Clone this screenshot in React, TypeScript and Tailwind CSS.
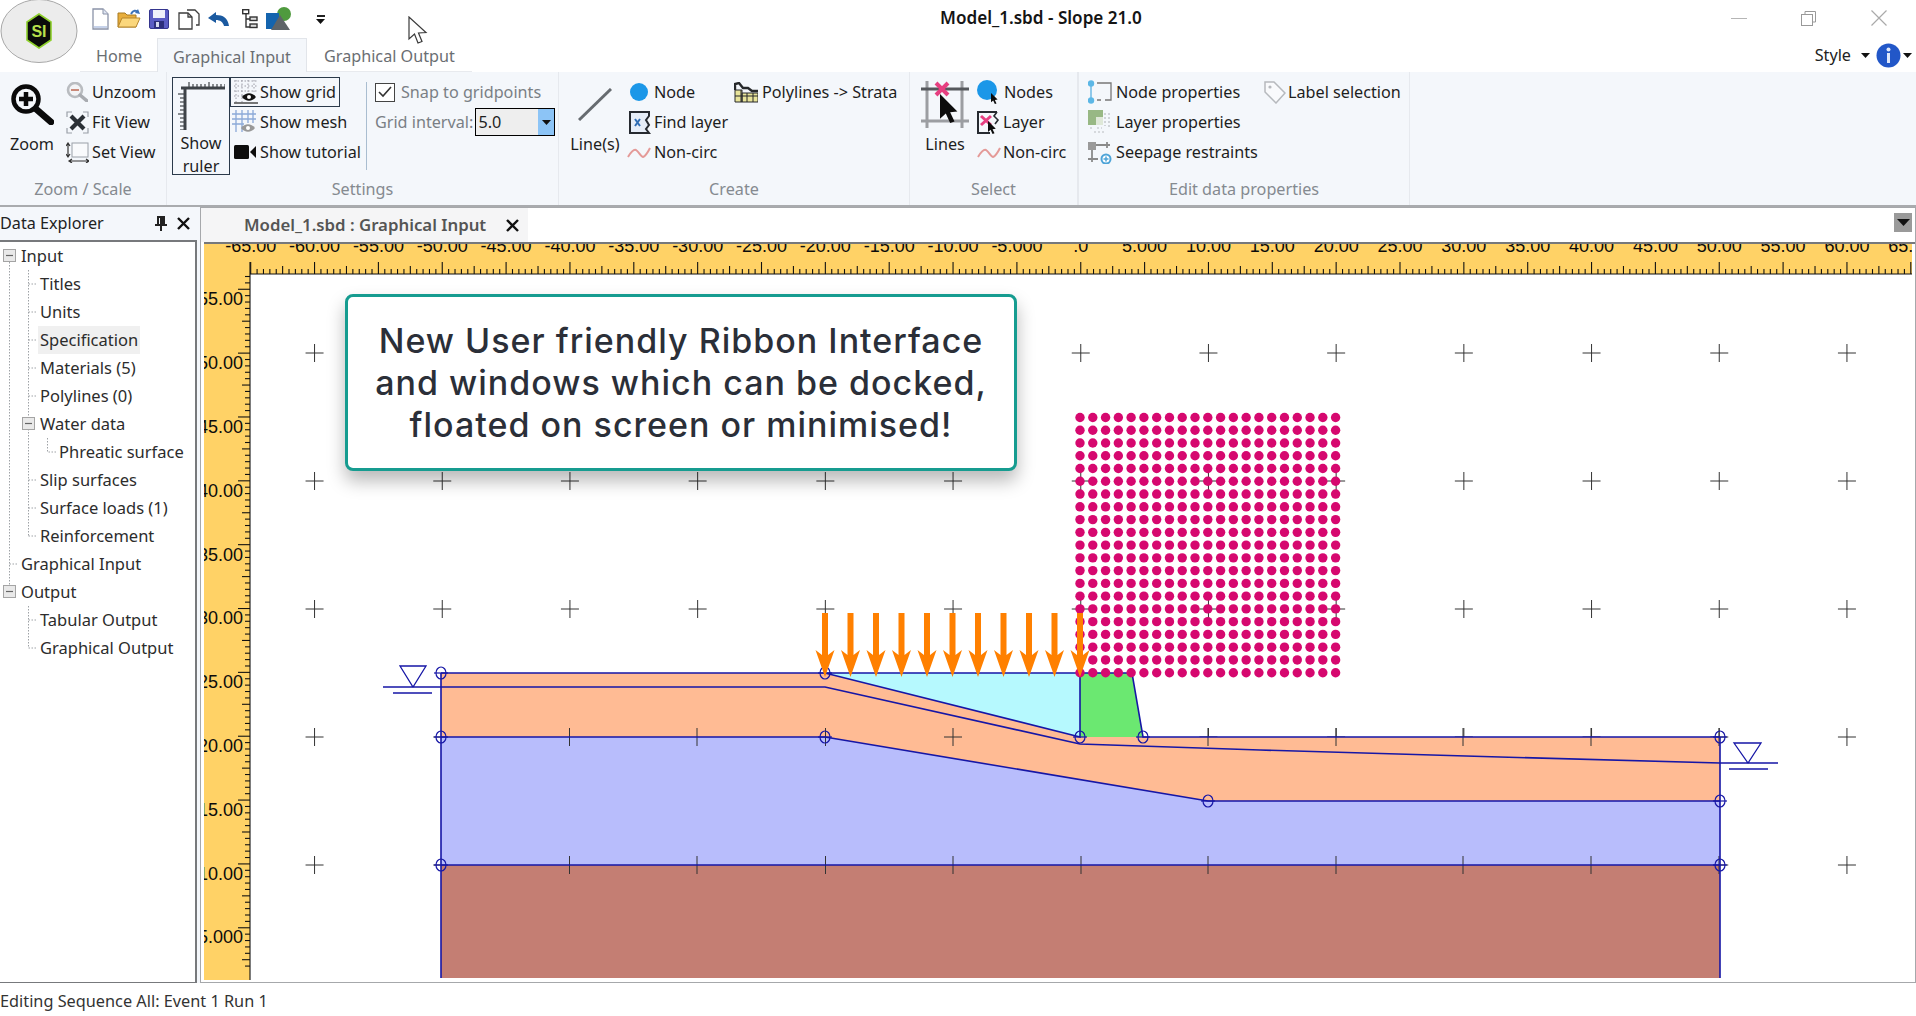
import type { ReactNode } from "react";

const LINE = "#1616a6";

const Caret = ({ w = 9, h = 5, color = "#111" }: { w?: number; h?: number; color?: string }) => (
  <svg width={w} height={h} viewBox="0 0 8 4" preserveAspectRatio="none">
    <path d="M0 0H8L4 4Z" fill={color} />
  </svg>
);

/* quick access toolbar */
const NewDoc = () => (
  <svg width="17" height="22" viewBox="0 0 17 22">
    <path d="M1 1H11L16 6V21H1Z" fill="#fff" stroke="#8a93a8" strokeWidth="1.3" />
    <path d="M11 1V6H16" fill="#dfe6f3" stroke="#8a93a8" />
    <path d="M2 18H15V20H2Z" fill="#c6d2ea" />
  </svg>
);
const OpenFolder = () => (
  <svg width="24" height="20" viewBox="0 0 24 20">
    <path d="M1 4H8L10 6H19V18H1Z" fill="#e8ae3c" stroke="#a87a22" />
    <path d="M1 18L5 9H23L19 18Z" fill="#fbd77c" stroke="#b8872c" />
    <path d="M14 5C16 1 19 1 21 3" fill="none" stroke="#3c72b8" strokeWidth="2" />
    <path d="M21 0L23 5L18 4Z" fill="#3c72b8" />
  </svg>
);
const SaveDisk = () => (
  <svg width="20" height="20" viewBox="0 0 20 20">
    <rect x="0.5" y="0.5" width="19" height="19" rx="1.5" fill="#5a5cc4" stroke="#34358e" />
    <rect x="4" y="1" width="12" height="8" fill="#eef0fa" />
    <rect x="5" y="12" width="10" height="7" fill="#2c2e7c" />
    <rect x="7" y="13" width="3" height="5" fill="#d5d8ef" />
  </svg>
);
const CopyDoc = () => (
  <svg width="22" height="21" viewBox="0 0 22 21" fill="#fff" stroke="#3d3d3d" strokeWidth="1.3">
    <path d="M9 1H17L21 5V16H18" />
    <path d="M1 4H10L14 8V20H1Z" />
    <path d="M10 4V8H14" fill="none" />
  </svg>
);
const Undo = () => (
  <svg width="22" height="14" viewBox="0 0 22 14">
    <path d="M0 6L8 0V3C15 3 20 6 21 14H16C15 10 12 8 8 8V11Z" fill="#1b5aa0" />
  </svg>
);
const TreeIcon = () => (
  <svg width="16" height="20" viewBox="0 0 16 20" fill="none" stroke="#333" strokeWidth="1.4">
    <rect x="0.7" y="0.7" width="6" height="4" />
    <path d="M4 5V18H8M4 10H8" />
    <rect x="8" y="8" width="7" height="3.5" fill="#ddd" />
    <rect x="8" y="15" width="7" height="3.5" fill="#ddd" />
  </svg>
);
const ModelIcon = () => (
  <svg width="25" height="24" viewBox="0 0 25 24">
    <circle cx="18" cy="7" r="7" fill="#4f9a3e" />
    <path d="M0 6H13V15L6 22H0Z" fill="#1464ae" />
    <path d="M14 8L24 23H5Z" fill="#5e6468" />
  </svg>
);

/* ribbon icons */
const ZoomIcon = () => (
  <svg width="43" height="41" viewBox="0 0 43 41" fill="none" stroke="#0a0a0a">
    <circle cx="15" cy="15" r="12.5" strokeWidth="4.5" />
    <path d="M15 8V22M8 15H22" strokeWidth="4.5" />
    <path d="M25 25L40 38" strokeWidth="6.5" strokeLinecap="round" />
  </svg>
);
const UnzoomIcon = () => (
  <svg width="22" height="20" viewBox="0 0 22 20" fill="none">
    <circle cx="9" cy="8" r="7" stroke="#b9bcc0" strokeWidth="2.6" fill="#f3f4f6" />
    <path d="M5 8H13" stroke="#c98a7a" strokeWidth="2" />
    <path d="M14 13L21 19" stroke="#a8abb0" strokeWidth="3.4" strokeLinecap="round" />
  </svg>
);
const FitIcon = () => (
  <svg width="23" height="23" viewBox="0 0 23 23" fill="none">
    <path d="M1 6V1H6M17 1H22V6M22 17V22H17M6 22H1V17" stroke="#9aa0a8" strokeWidth="1.2" />
    <path d="M5 5L18 18M18 5L5 18" stroke="#2b3036" strokeWidth="4.2" />
  </svg>
);
const SetViewIcon = () => (
  <svg width="23" height="21" viewBox="0 0 23 21" fill="none">
    <rect x="6" y="1" width="16" height="14" stroke="#9aa0a8" fill="#f9fafc" />
    <path d="M2 2V14M0 4L2 1L4 4M0 12L2 15L4 12" stroke="#333" strokeWidth="1.2" />
    <path d="M4 19H22M6 17L3 19L6 21M20 17L23 19L20 21" stroke="#333" strokeWidth="1.2" />
  </svg>
);
const RulerIcon = () => {
  const ticks = [0, 1, 2, 3, 4, 5, 6, 7, 8, 9];
  return (
    <svg className="shrink-0" width="48" height="50" viewBox="0 0 48 50" stroke="#3e4348" fill="none">
      <path d="M4 8H48" strokeWidth="3" />
      <path d="M8 8V50" strokeWidth="3" />
      {ticks.map((t) => (
        <path key={t} d={`M${12 + t * 4} 8V${t % 5 === 0 ? 2 : 4}`} strokeWidth="1.2" />
      ))}
      {ticks.map((t) => (
        <path key={t} d={`M8 ${14 + t * 4}H${t % 5 === 0 ? 1 : 3}`} strokeWidth="1.2" />
      ))}
    </svg>
  );
};
const Eye = ({ x, y, color }: { x: number; y: number; color: string }) => (
  <g transform={`translate(${x} ${y})`}>
    <path d="M0 4C4 -1 10 -1 14 4C10 9 4 9 0 4Z" fill={color} />
    <circle cx="7" cy="4" r="2" fill="#fff" />
  </g>
);
const GridIcon = () => (
  <svg width="25" height="24" viewBox="0 0 25 24">
    <path d="M1 1H24M1 6H24M1 11H24M1 16H10M3 0V23M9 0V23M15 0V13M21 0V13" stroke="#9a9aa4" strokeWidth="1" strokeDasharray="1.5 2" fill="none" />
    <path d="M1 23H25" stroke="#555" strokeWidth="1.6" />
    <Eye x={9} y={13} color="#111" />
  </svg>
);
const MeshIcon = () => (
  <svg width="25" height="25" viewBox="0 0 25 25">
    <path d="M0 4H24M0 9H24M0 14H12M4 0V22M10 0V22M16 0V13M21 0V13" stroke="#8ba9d8" strokeWidth="1.3" fill="none" />
    <Eye x={9} y={14} color="#999" />
  </svg>
);
const TutorialIcon = () => (
  <svg width="22" height="14" viewBox="0 0 22 14">
    <rect width="15" height="14" rx="1.5" fill="#0d0d0d" />
    <path d="M16 7L22 1V13Z" fill="#0d0d0d" />
  </svg>
);
const LineIcon = () => (
  <svg width="34" height="33" viewBox="0 0 34 33">
    <path d="M1 32L33 1" stroke="#666b70" strokeWidth="3" />
  </svg>
);
const NodeIcon = () => (
  <svg width="18" height="18" viewBox="0 0 18 18">
    <circle cx="9" cy="9" r="9" fill="#1b97e8" />
  </svg>
);
const FindLayerIcon = () => (
  <svg width="22" height="23" viewBox="0 0 22 23" fill="none">
    <path d="M20 1H1V22H20L17 18L20 14L17 9L20 5Z" fill="#e6edf8" stroke="#262a30" strokeWidth="2" />
    <path d="M6 8L11 15M11 8L6 15" stroke="#2e6cb4" strokeWidth="2" />
  </svg>
);
const NonCircIcon = () => (
  <svg width="24" height="13" viewBox="0 0 24 13" fill="none">
    <path d="M1 11C4 6 7 3 9 4C12 6 14 11 16 11C19 10 21 6 23 2" stroke="#e49a98" strokeWidth="2" />
  </svg>
);
const PolylinesIcon = () => (
  <svg width="24" height="21" viewBox="0 0 24 21">
    <path d="M1 20V8H8V20Z M8 20V11H24V20Z" fill="#e8e49a" stroke="#26282a" />
    <path d="M1 14H24M7 8V20M13 11V20M19 11V20" stroke="#26282a" fill="none" />
    <path d="M1 8V2L5 1L9 6L14 6L18 9L24 9" stroke="#26282a" strokeWidth="2.4" fill="none" />
  </svg>
);
const Pointer = ({ x, y, s = 1 }: { x: number; y: number; s?: number }) => (
  <path transform={`translate(${x} ${y}) scale(${s})`} d="M0 0L12 12L7 12.5L10 19L7 20L4 13.5L0 17Z" fill="#0c0c0c" />
);
const LinesIcon = () => (
  <svg width="49" height="50" viewBox="0 0 49 50" fill="none">
    <path d="M6 1V48M41 1V48" stroke="#9c9ea2" strokeWidth="3" />
    <path d="M0 9H48" stroke="#55585c" strokeWidth="3" />
    <path d="M0 41H48" stroke="#9c9ea2" strokeWidth="3" />
    <path d="M15 3L27 15M27 3L15 15" stroke="#e63f80" strokeWidth="4" />
    <Pointer x={19} y={14} s={1.45} />
  </svg>
);
const NodesIcon = () => (
  <svg width="24" height="24" viewBox="0 0 24 24">
    <circle cx="10" cy="10" r="10" fill="#1b97e8" />
    <Pointer x={14} y={13} s={0.55} />
  </svg>
);
const LayerSelIcon = () => (
  <svg width="23" height="23" viewBox="0 0 23 23" fill="none">
    <path d="M20 1H1V22H13" stroke="#262a30" strokeWidth="2" />
    <path d="M20 1L17 5L21 9L18 13" stroke="#262a30" strokeWidth="1.6" />
    <path d="M4 5L14 14M14 5L4 14" stroke="#e63f80" strokeWidth="3" />
    <Pointer x={11} y={10} s={0.65} />
  </svg>
);
const NodePropsIcon = () => (
  <svg width="24" height="24" viewBox="0 0 24 24" fill="none">
    <path d="M3 4V20M3 4" stroke="#8ec8ea" strokeWidth="2" />
    <circle cx="3" cy="3.5" r="3.2" fill="#5cb7e6" />
    <circle cx="3" cy="20.5" r="3.2" fill="#5cb7e6" />
    <path d="M9 3H23V20H17M9 20H13" stroke="#777" strokeWidth="1.3" />
  </svg>
);
const LayerPropsIcon = () => (
  <svg width="24" height="24" viewBox="0 0 24 24" fill="none">
    <rect x="0" y="0" width="15" height="15" fill="#98b884" />
    <rect x="8" y="7" width="7" height="8" fill="#dfe8d8" />
    <path d="M17 3V16M2 18H6M9 18H14M6 22H18M21 3V18" stroke="#b8bcc0" strokeWidth="1.2" strokeDasharray="2 2" />
  </svg>
);
const SeepageIcon = () => (
  <svg width="24" height="24" viewBox="0 0 24 24" fill="none">
    <rect x="0" y="2" width="8" height="8" fill="#9a9a9a" />
    <path d="M8 5H22M19 2V8M4 10V22M0 19H10" stroke="#8a8a8a" strokeWidth="1.8" />
    <circle cx="18" cy="19" r="4.5" stroke="#4ea4d8" strokeWidth="2" fill="#fff" />
    <path d="M15.5 19H20.5M18 16.5V21.5" stroke="#4ea4d8" strokeWidth="1.5" />
  </svg>
);
const LabelIcon = () => (
  <svg width="22" height="23" viewBox="0 0 22 23" fill="none">
    <path d="M1 1H10L21 12L12 22L1 11Z" stroke="#b6b9bd" strokeWidth="1.5" fill="#f9fafc" />
    <circle cx="6" cy="6" r="1.6" fill="#b6b9bd" />
  </svg>
);

const RibbonItem = ({ icon, label, box, className = "" }: { icon: ReactNode; label: string; box: number; className?: string }) => (
  <div className={`flex h-[30px] items-center whitespace-nowrap ${className}`}>
    <span className="flex shrink-0 items-center" style={{ width: box }}>
      {icon}
    </span>
    <span>{label}</span>
  </div>
);

const BigButton = ({ icon, label, width }: { icon: ReactNode; label: string; width: number }) => (
  <div className="flex h-[90px] shrink-0 flex-col items-center" style={{ width }}>
    <div className="flex h-[55px] items-center">{icon}</div>
    <span className="leading-[24px]">{label}</span>
  </div>
);

const RibbonGroup = ({ width, title, children, last }: { width: number; title: string; children: ReactNode; last?: boolean }) => (
  <div className={`flex shrink-0 flex-col border-[#e6e9ee] ${last ? "border-x" : "border-r"}`} style={{ width }}>
    <div className="flex h-[101px] pt-[5px]">{children}</div>
    <div className="flex h-[32px] items-center justify-center text-[16.2px] text-[#858a90]">{title}</div>
  </div>
);

const Ribbon = () => (
  <div className="flex h-[135px] border-b-2 border-[#a9abae] bg-[#f4f7fb] text-[16.2px] text-[#1e1e1e]">
    <RibbonGroup width={167} title="Zoom / Scale">
      <BigButton icon={<ZoomIcon />} label="Zoom" width={64} />
      <div className="ml-[2px]">
        <RibbonItem box={26} icon={<UnzoomIcon />} label="Unzoom" />
        <RibbonItem box={26} icon={<FitIcon />} label="Fit View" />
        <RibbonItem box={26} icon={<SetViewIcon />} label="Set View" />
      </div>
    </RibbonGroup>

    <RibbonGroup width={392} title="Settings">
      <div className="ml-[5px] flex h-[98px] w-[58px] shrink-0 flex-col items-center overflow-hidden border border-[#2b3a4a] pt-[2px] leading-[23px]">
        <RulerIcon />
        <span className="mt-[2px]">Show</span>
        <span>ruler</span>
      </div>
      <div>
        <div className="flex h-[30px] w-[110px] items-center border border-[#2b3a4a] pl-[2px]">
          <span className="w-[27px]">
            <GridIcon />
          </span>
          <span>Show grid</span>
        </div>
        <RibbonItem className="pl-[2px]" box={28} icon={<MeshIcon />} label="Show mesh" />
        <RibbonItem className="pl-[4px]" box={26} icon={<TutorialIcon />} label="Show tutorial" />
      </div>
      <div className="mt-[5px] ml-[5px] h-[88px] w-px bg-[#a9bdd0]" />
      <div className="ml-[8px] text-[#7a7f85]">
        <div className="flex h-[30px] items-center">
          <span className="mr-[6px] flex h-[19px] w-[20px] items-center justify-center border border-[#444] bg-white">
            <svg width="14" height="12" viewBox="0 0 14 12" fill="none">
              <path d="M1 6L5 10L13 1" stroke="#333" strokeWidth="1.6" />
            </svg>
          </span>
          Snap to gridpoints
        </div>
        <div className="flex h-[30px] items-center whitespace-nowrap">
          Grid interval:
          <div className="ml-[2px] flex h-[28px] w-[80px] items-center justify-between border border-black bg-[#eeeeee] pl-[2px] text-[#1e1e1e]">
            5.0
            <span className="flex h-full w-[16px] items-center justify-center bg-[#8cc4f6]">
              <Caret />
            </span>
          </div>
        </div>
      </div>
    </RibbonGroup>

    <RibbonGroup width={351} title="Create">
      <div className="ml-[8px]">
        <BigButton icon={<LineIcon />} label="Line(s)" width={56} />
      </div>
      <div className="ml-[4px] w-[107px]">
        <RibbonItem className="pl-[3px]" box={24} icon={<NodeIcon />} label="Node" />
        <RibbonItem className="pl-[2px]" box={25} icon={<FindLayerIcon />} label="Find layer" />
        <RibbonItem box={27} icon={<NonCircIcon />} label="Non-circ" />
      </div>
      <RibbonItem box={28} icon={<PolylinesIcon />} label="Polylines -> Strata" />
    </RibbonGroup>

    <RibbonGroup width={168} title="Select">
      <div className="ml-[7px]">
        <BigButton icon={<LinesIcon />} label="Lines" width={56} />
      </div>
      <div className="ml-[4px]">
        <RibbonItem box={27} icon={<NodesIcon />} label="Nodes" />
        <RibbonItem box={26} icon={<LayerSelIcon />} label="Layer" />
        <RibbonItem box={26} icon={<NonCircIcon />} label="Non-circ" />
      </div>
    </RibbonGroup>

    <RibbonGroup width={332} title="Edit data properties" last>
      <div className="ml-[9px] w-[176px]">
        <RibbonItem box={28} icon={<NodePropsIcon />} label="Node properties" />
        <RibbonItem box={28} icon={<LayerPropsIcon />} label="Layer properties" />
        <RibbonItem box={28} icon={<SeepageIcon />} label="Seepage restraints" />
      </div>
      <RibbonItem box={24} icon={<LabelIcon />} label="Label selection" />
    </RibbonGroup>
  </div>
);

const Header = () => (
  <div className="relative h-[72px] bg-white">
    {/* application button sits over both rows */}
    <svg className="absolute -top-[2px] left-0" width="80" height="66" viewBox="0 0 80 66">
      <ellipse cx="39" cy="33" rx="38" ry="31.5" fill="#ececec" stroke="#a8a8a8" />
      <path d="M39 16L51 24V42L39 50L27 42V24Z" fill="#0b0b0b" stroke="#8ed02c" strokeWidth="1.6" />
      <text x="39" y="39" textAnchor="middle" fontFamily="'Liberation Sans', sans-serif" fontWeight="700" fontSize="16" fill="#b8e04c">
        SI
      </text>
    </svg>
    <div className="flex h-[38px] items-start">
      <div className="flex w-[940px] shrink-0 items-center pt-[7px] pl-[92px]">
        <NewDoc />
        <span className="ml-[8px]"><OpenFolder /></span>
        <span className="ml-[8px]"><SaveDisk /></span>
        <span className="ml-[9px]"><CopyDoc /></span>
        <span className="ml-[8px]"><Undo /></span>
        <span className="ml-[12px]"><TreeIcon /></span>
        <span className="ml-[8px]"><ModelIcon /></span>
        <span className="ml-[25px] flex flex-col items-center gap-[2px]">
          <span className="h-[2px] w-[8px] bg-[#222]" />
          <Caret w={9} h={5} />
        </span>
      </div>
      <div className="pt-[5px] text-[17.1px] font-semibold whitespace-nowrap text-[#141414]">Model_1.sbd - Slope 21.0</div>
      <div className="ml-auto flex items-center pt-[10px] pr-[29px] text-[#b5b5b5]">
        <span className="h-px w-[16px] bg-[#b5b5b5]" />
        <svg className="ml-[54px]" width="15" height="15" viewBox="0 0 15 15" fill="none" stroke="#999">
          <rect x="0.5" y="3.5" width="11" height="11" />
          <path d="M4 3V0.5H14.5V11H12" />
        </svg>
        <svg className="ml-[55px]" width="16" height="16" viewBox="0 0 16 16" fill="none" stroke="#aaa" strokeWidth="1.2">
          <path d="M0.5 0.5L15.5 15.5M15.5 0.5L0.5 15.5" />
        </svg>
      </div>
    </div>
    <div className="flex h-[34px] text-[16.2px] text-[#6a6e72]">
      <div className="ml-[80px] flex w-[77px] items-center border-b border-[#e8eaee] pt-[4px] pl-[16px]">Home</div>
      <div className="flex w-[150px] items-center justify-center border-x border-t border-[#e2e5ea] bg-[#f4f7fb] pt-[4px]">Graphical Input</div>
      <div className="flex w-[165px] items-center border-b border-[#e8eaee] pt-[4px] pl-[17px]">Graphical Output</div>
      <div className="ml-auto flex items-center pt-[1px] pr-[4px] text-[#222]">
        Style
        <span className="mr-[6px] ml-[10px]"><Caret /></span>
        <svg width="25" height="25" viewBox="0 0 25 25">
          <circle cx="12.5" cy="12.5" r="12" fill="#2257c8" />
          <circle cx="12.5" cy="6.5" r="2" fill="#dfe8fa" />
          <rect x="11" y="10" width="3" height="10" fill="#dfe8fa" />
        </svg>
        <span className="ml-[2px]"><Caret /></span>
      </div>
    </div>
  </div>
);

const treeRows = [
  { label: "Input", x: 21 },
  { label: "Titles", x: 40 },
  { label: "Units", x: 40 },
  { label: "Specification", x: 40, selected: true },
  { label: "Materials (5)", x: 40 },
  { label: "Polylines (0)", x: 40 },
  { label: "Water data", x: 40 },
  { label: "Phreatic surface", x: 59 },
  { label: "Slip surfaces", x: 40 },
  { label: "Surface loads (1)", x: 40 },
  { label: "Reinforcement", x: 40 },
  { label: "Graphical Input", x: 21 },
  { label: "Output", x: 21 },
  { label: "Tabular Output", x: 40 },
  { label: "Graphical Output", x: 40 },
];

const DataExplorer = () => (
  <div className="flex w-[197px] shrink-0 flex-col">
    <div className="flex h-[33px] items-center justify-between pr-[7px] text-[16.2px] text-[#222]">
      Data Explorer
      <span className="flex items-center gap-[10px]">
        <svg width="12" height="15" viewBox="0 0 12 15" fill="#222">
          <path d="M2 0H10V8H12V10H7V15H5V10H0V8H2ZM4 2V8H5V2Z" />
        </svg>
        <svg width="13" height="13" viewBox="0 0 13 13" fill="none" stroke="#111" strokeWidth="2.4">
          <path d="M1 1L12 12M12 1L1 12" />
        </svg>
      </span>
    </div>
    <div className="relative flex-1 border-t-2 border-r-2 border-b border-[#77797c] bg-white text-[16.5px] text-[#2c2c2c]">
      {/* dotted tree guides and expander boxes drawn over the rows */}
      <svg className="pointer-events-none absolute top-0 left-0" width="90" height="430" fill="none">
        <g stroke="#9ea2a6" strokeDasharray="1.5 1.5">
          <path d="M9.5 14V350M9.5 322H17" />
          <path d="M28.5 28V294M28.5 42H37M28.5 70H37M28.5 98H37M28.5 126H37M28.5 154H37M28.5 238H37M28.5 266H37M28.5 294H37" />
          <path d="M47.5 196V210H56" />
          <path d="M28.5 364V406M28.5 378H37M28.5 406H37" />
        </g>
        {[14, 182, 350].map((y, i) => (
          <g key={y}>
            <rect x={i === 1 ? 22.5 : 3.5} y={y - 6.5} width="12" height="12" fill="#e9e9e9" stroke="#a4a4a4" />
            <path d={`M${i === 1 ? 25 : 6} ${y - 0.5}h7`} stroke="#666" strokeWidth="1.2" />
          </g>
        ))}
      </svg>
      {treeRows.map((row) => (
        <div key={row.label} className="flex h-[28px] items-center whitespace-nowrap" style={{ paddingLeft: row.x - 2 }}>
          <span className={`px-[2px] leading-[28px] ${row.selected ? "bg-[#f0f0f0]" : ""}`}>{row.label}</span>
        </div>
      ))}
    </div>
  </div>
);

/* all canvas drawing uses page coordinates so it reads against the picture */
const tick = 6.385;
const xAt = (v: number) => 250.7 + (v + 65) * 12.77;
const yAt = (v: number) => 289.3 + (55 - v) * 12.76;
const fmt = (v: number) => (v === 0 ? ".0" : Math.abs(v) === 5 ? `${v}.000` : `${v}.00`);

const range = (n: number) => Array.from({ length: n }, (_, i) => i);
const plusX = range(13).map((i) => xAt(-60 + i * 10));
const plusY = [353, 481, 609, 737, 865];
const nodes = [
  [441, 673], [825, 673], [441, 737], [825, 737], [1080, 737], [1143, 737],
  [441, 865], [1208, 801], [1720, 737], [1720, 801], [1720, 865],
];

const Canvas = () => (
  <svg className="block h-[736px] w-[1708px]" viewBox="204 244 1708 736">
    <rect x="204" y="244" width="1708" height="736" fill="#fff" />
    <rect x="204" y="244" width="1708" height="30" fill="#ffd266" />
    <rect x="204" y="244" width="46" height="736" fill="#ffd266" />

    {/* rulers */}
    <g fontFamily="'Liberation Sans', Arial, sans-serif" fontSize="18" fill="#0b0b0b">
      {range(27).map((i) => {
        const v = -65 + i * 5;
        return (
          <text key={v} x={xAt(v)} y={251.5} textAnchor="middle">
            {fmt(v)}
          </text>
        );
      })}
      {range(11).map((i) => {
        const v = 55 - i * 5;
        return (
          <text key={v} x={243} y={yAt(v) + 16} textAnchor="end">
            {fmt(v)}
          </text>
        );
      })}
    </g>
    <g stroke="#111" strokeWidth="1.1">
      <path d="M250 274H1912M250 262V980" />
      {range(261).map((i) => {
        const x = 250.7 + i * tick;
        const len = i % 10 === 0 ? 12 : i % 5 === 0 ? 8 : 5;
        return <path key={i} d={`M${x} 274V${274 - len}`} />;
      })}
      {range(109).map((i) => {
        const y = 276.5 + i * tick;
        const k = i - 2;
        const len = k % 10 === 0 ? 12 : k % 5 === 0 ? 8 : 5;
        return <path key={i} d={`M250 ${y}H${250 - len}`} />;
      })}
    </g>

    {/* grid points */}
    <g stroke="#333" strokeWidth="1" fill="none">
      {plusY.map((y) =>
        plusX.map((x) => <path key={`${x}-${y}`} d={`M${x - 9} ${y}H${x + 9}M${x} ${y - 9}V${y + 9}`} />),
      )}
    </g>

    {/* soil layers */}
    <path d="M441 865H1720V978H441Z" fill="#c47e73" />
    <path d="M441 737H825L1208 801H1720V865H441Z" fill="#b8bdfc" />
    <path d="M441 673H825L1080 737H1720V801H1208L825 737H441Z" fill="#ffbb94" />
    <path d="M825 673H1080V737Z" fill="#b6f9fe" />
    <path d="M1080 673H1132L1143 737H1080Z" fill="#6be871" />

    {/* grid point ticks that show on the layers */}
    <g stroke="#333" strokeWidth="1" fill="none">
      {[569.5, 697, 825.5, 1208, 1336, 1463, 1591, 1719].map((x) =>
        [737, 865].map((y) => <path key={`${x}-${y}`} d={`M${x} ${y - 9}V${y + 9}`} />),
      )}
      <path d="M944 737H962M953 728V746" />
      <path d="M953 865V856M953 865V874M1081 856V874" />
    </g>

    <g stroke={LINE} strokeWidth="1.6" fill="none">
      <path d="M441 673H825L1080 737V673M825 673H1132L1143 737H1720M441 673V978M1720 737V978" />
      <path d="M441 737H825L1208 801H1720M441 865H1720" />
      <path d="M441 687H825L1080 744L1260 750L1500 757L1720 763" />
      <path d="M400 666H426L413 687ZM383 687H441M393 693H432" strokeWidth="1.3" />
      <path d="M1734 743H1761L1748 763ZM1720 763H1778M1729 769H1768" strokeWidth="1.3" />
    </g>
    <g stroke={LINE} strokeWidth="1.2" fill="none">
      {nodes.map(([x, y]) => (
        <g key={`${x}-${y}`}>
          <ellipse cx={x} cy={y} rx="5" ry="6" />
          <path d={`M${x - 7} ${y}H${x + 7}`} />
        </g>
      ))}
    </g>

    {/* search grid */}
    <g fill="#d6086f">
      {range(21).map((r) =>
        range(21).map((c) => <circle key={`${r}-${c}`} cx={1080 + c * 12.78} cy={417.5 + r * 12.76} r="4.7" />),
      )}
    </g>

    {/* surface load */}
    <g fill="#ff8000">
      {range(11).map((i) => {
        const x = 825 + i * 25.5;
        return <path key={i} d={`M${x - 3} 613H${x + 3}V655L${x + 9.5} 650L${x} 677L${x - 9.5} 650L${x - 3} 655Z`} />;
      })}
    </g>
  </svg>
);

const DocumentPane = () => (
  <div className="ml-[3px] flex min-w-0 flex-1 flex-col border-x border-t border-b border-[#a6a8ab] bg-white">
    <div className="flex h-[34px] items-stretch justify-between">
      <div className="flex w-[327px] items-center bg-[#f5f5f6] pl-[43px] text-[16.8px] font-semibold text-[#555]">
        Model_1.sbd : Graphical Input
        <svg className="ml-[20px]" width="13" height="13" viewBox="0 0 13 13" fill="none" stroke="#111" strokeWidth="2.4">
          <path d="M1 1L12 12M12 1L1 12" />
        </svg>
      </div>
      <div className="mt-[5px] mr-[3px] flex h-[19px] w-[18px] items-center justify-center bg-[#9a9a9a]">
        <Caret w={13} h={7} />
      </div>
    </div>
    <div className="relative ml-[3px] h-[737px] border-t-2 border-[#76787b]">
      <Canvas />
      <div className="absolute top-[50px] left-[141px] flex h-[177px] w-[672px] flex-col items-center justify-center rounded-[8px] border-[3px] border-[#169c90] bg-white font-['Inter',sans-serif] text-[34px] leading-[42px] font-medium tracking-[1px] text-[#2b2f38] shadow-[0_10px_18px_rgba(0,0,0,0.28)]">
        <span>New User friendly Ribbon Interface</span>
        <span>and windows which can be docked,</span>
        <span>floated on screen or minimised!</span>
      </div>
    </div>
  </div>
);

const Cursor = () => (
  <svg className="absolute top-[16px] left-[408px]" width="20" height="29" viewBox="0 0 20 29">
    <path d="M1 1V23L6.5 18L10 27L14 25.5L10.5 17L18 16.5Z" fill="#fff" stroke="#3a3a3a" strokeWidth="1.2" />
  </svg>
);

export default function App() {
  return (
    <div className="relative flex h-[1016px] w-[1916px] flex-col overflow-hidden bg-white font-['Noto_Sans','Liberation_Sans',sans-serif]">
      <Header />
      <Ribbon />
      <div className="flex h-[776px] bg-[#f4f7fb]">
        <DataExplorer />
        <DocumentPane />
      </div>
      <div className="flex h-[33px] items-center pt-[3px] text-[16.3px] text-[#333]">Editing Sequence All: Event 1 Run 1</div>
      <Cursor />
    </div>
  );
}
